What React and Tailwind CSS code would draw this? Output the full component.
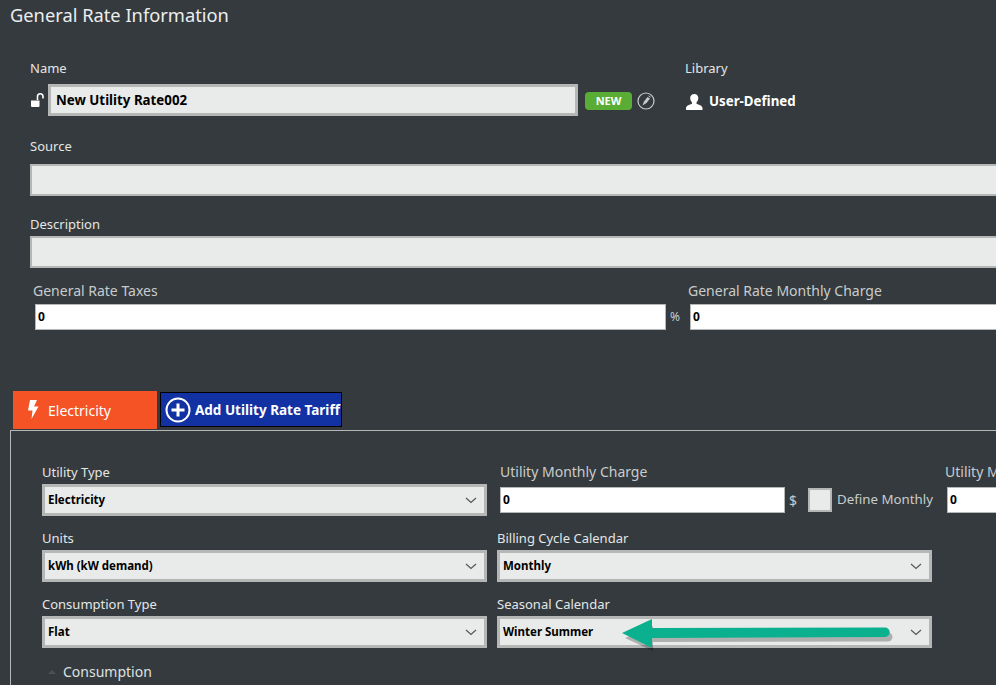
import React from 'react';

const Chevron = () => (
  <svg width="12" height="7" viewBox="0 0 12 7" className="shrink-0">
    <path d="M1 1l5 4.500L11 1" fill="none" stroke="#555b5e" strokeWidth="1.3" />
  </svg>
);

// Label above a dropdown, all the dropdowns share this look
const SelectField = ({ label, value, className }) => (
  <div className={className}>
    <div className="h-[16px] text-[13px] leading-[16px] text-[#e4e6e6]">{label}</div>
    <div className="mt-[4px] flex h-[32px] items-center justify-between border-[3px] border-[#b4b7b6] bg-[#e9ebea] pl-[3px] pr-[7px]">
      <span className="text-[11.5px] font-bold text-black">{value}</span>
      <Chevron />
    </div>
  </div>
);

const NumberInput = ({ className }) => (
  <div className={`flex h-[26px] items-center border border-[#b4b7b6] bg-white pl-[2px] text-[12px] font-bold text-black ${className}`}>
    0
  </div>
);

const LockIcon = () => (
  <svg width="15" height="16" viewBox="0 0 15 16" className="shrink-0">
    <path d="M1 8.500h8.500v5.500a1 1 0 0 1-1 1H2a1 1 0 0 1-1-1z" fill="#fff" />
    <path d="M7.500 8V4.500a2.700 2.700 0 0 1 5.500 0V6.500" fill="none" stroke="#fff" strokeWidth="1.6" />
  </svg>
);

const InfoIcon = () => (
  <svg width="18" height="18" viewBox="0 0 18 18" className="shrink-0">
    <circle cx="9" cy="9" r="8" fill="none" stroke="#c9cccc" strokeWidth="1.2" />
    <path d="M5.500 13.500l1.500-4 3.500-4.500 2.500 1.500-3.500 4.500z" fill="#c9cccc" />
    <path d="M11.500 3.800l2 1.200" stroke="#c9cccc" strokeWidth="1" />
  </svg>
);

const UserIcon = () => (
  <svg width="17" height="16" viewBox="0 0 17 16" className="shrink-0">
    <path d="M8.500 0c2.400 0 3.800 1.700 3.800 4 0 1.800-.8 3.300-1.800 4.200v1.500c1.800.8 6 1.700 6 4.300v2H0v-2c0-2.600 4.200-3.500 6-4.300V8.200C5 7.300 4.200 5.800 4.200 4 4.200 1.700 5.600 0 8.500 0z" fill="#fff" />
  </svg>
);

const BoltIcon = () => (
  <svg width="14" height="20" viewBox="0 0 14 20" className="shrink-0">
    <path d="M4 0h7L8 6.500h4.500L5.500 19l1-8.500H2z" fill="#fff" />
  </svg>
);

const PlusCircle = () => (
  <svg width="26" height="26" viewBox="0 0 26 26" className="shrink-0">
    <circle cx="13" cy="13" r="11.500" fill="none" stroke="#fff" strokeWidth="2" />
    <path d="M13 6.500v13M6.500 13h13" stroke="#fff" strokeWidth="3" />
  </svg>
);

export default function App() {
  return (
    <div className="relative h-[685px] w-[996px] overflow-hidden bg-[#343a3e] font-['Noto_Sans','Open_Sans',sans-serif] text-[#e4e6e6]">
      {/* General info */}
      <div className="pl-[10px] pt-[2px] text-[18.3px] leading-[26px] text-[#eceeee]">General Rate Information</div>

      <div className="mt-[32px] flex pl-[30px]">
        <div className="w-[655px] shrink-0">
          <div className="h-[16px] text-[13px] leading-[16px]">Name</div>
          <div className="mt-[8px] flex items-center">
            <div className="w-[18px]"><LockIcon /></div>
            <div className="flex h-[32px] w-[530px] items-center border-[3px] border-[#b4b7b6] bg-[#e9ebea] pl-[5px] pt-[1px] text-[13.3px] font-bold text-black">
              New Utility Rate002
            </div>
            <div className="ml-[7px] mt-[2px] flex h-[18px] w-[47px] items-center justify-center rounded-[4px] bg-[#5aad34] text-[11px] font-bold text-white">NEW</div>
            <div className="ml-[5px] mt-[2px]"><InfoIcon /></div>
          </div>
        </div>
        <div>
          <div className="h-[16px] text-[13px] leading-[16px]">Library</div>
          <div className="mt-[10px] flex h-[32px] items-center gap-[6px] pl-[1px]">
            <UserIcon />
            <span className="text-[13.3px] font-bold text-white">User-Defined</span>
          </div>
        </div>
      </div>

      <div className="ml-[30px] mt-[20px] h-[16px] text-[13px] leading-[16px]">Source</div>
      <div className="ml-[30px] mt-[10px] h-[32px] w-[980px] border-[2px] border-[#b4b7b6] bg-[#e9ebea]" />

      <div className="ml-[30px] mt-[20px] h-[16px] text-[13px] leading-[16px]">Description</div>
      <div className="ml-[30px] mt-[4px] h-[32px] w-[980px] border-[2px] border-[#b4b7b6] bg-[#e9ebea]" />

      <div className="mt-[14px] flex pl-[33px]">
        <div className="w-[655px] shrink-0">
          <div className="h-[18px] text-[14px] leading-[18px] text-[#c9cccc]">General Rate Taxes</div>
          <div className="mt-[4px] flex items-center pl-[2px]">
            <NumberInput className="w-[631px]" />
            <span className="ml-[4px] text-[12px] text-[#c9cccc]">%</span>
          </div>
        </div>
        <div className="shrink-0">
          <div className="h-[18px] text-[14px] leading-[18px] text-[#c9cccc]">General Rate Monthly Charge</div>
          <NumberInput className="ml-[2px] mt-[4px] w-[320px]" />
        </div>
      </div>

      {/* Tabs */}
      <div className="mt-[61px] flex items-start pl-[13px]">
        <div className="flex h-[38px] w-[144px] items-center gap-[8px] bg-[#f55225] pl-[13px] text-[14px] text-white">
          <BoltIcon />
          <span>Electricity</span>
        </div>
        <div className="ml-[3px] mt-[1px] flex h-[35px] w-[182px] items-center gap-[4px] border border-black bg-[#1232a3] pl-[4px] text-[13.5px] font-bold text-white">
          <PlusCircle />
          <span className="whitespace-nowrap pt-[1px]">Add Utility Rate Tariff</span>
        </div>
      </div>

      {/* Tariff panel */}
      <div className="ml-[10px] mt-[1px] h-[300px] w-[1000px] border border-[#b4b7b6] pl-[31px] pt-[33px]">
        <div className="flex">
          <SelectField label="Utility Type" value="Electricity" className="w-[445px] shrink-0" />
          <div className="ml-[13px] w-[445px] shrink-0">
            <div className="h-[18px] text-[14px] leading-[16px] text-[#c9cccc]">Utility Monthly Charge</div>
            <div className="mt-[4px] flex items-center pt-[1px]">
              <NumberInput className="w-[285px]" />
              <span className="ml-[4px] text-[14px] text-[#c9cccc]">$</span>
              <div className="ml-[11px] h-[24px] w-[24px] border-[2px] border-[#b4b7b6] bg-[#e9ebea]" />
              <span className="ml-[5px] whitespace-nowrap text-[13.3px] text-[#c9cccc]">Define Monthly</span>
            </div>
          </div>
          <div className="w-[60px] shrink-0">
            <div className="h-[18px] overflow-hidden whitespace-nowrap text-[14px] leading-[16px] text-[#c9cccc]">Utility Monthly</div>
            <NumberInput className="ml-[2px] mt-[5px] w-[60px]" />
          </div>
        </div>

        <div className="mt-[14px] flex">
          <SelectField label="Units" value="kWh (kW demand)" className="w-[445px] shrink-0" />
          <SelectField label="Billing Cycle Calendar" value="Monthly" className="ml-[10px] w-[435px] shrink-0" />
        </div>

        <div className="mt-[14px] flex">
          <SelectField label="Consumption Type" value="Flat" className="w-[445px] shrink-0" />
          <SelectField label="Seasonal Calendar" value="Winter Summer" className="ml-[10px] w-[435px] shrink-0" />
        </div>

        <div className="ml-[6px] mt-[15px] flex items-center gap-[7px]">
          <div className="h-0 w-0 border-x-[4px] border-b-[4px] border-x-transparent border-b-[#4a5053]" />
          <span className="text-[14px] leading-[18px] text-[#dfe1e1]">Consumption</span>
        </div>
      </div>

      {/* Annotation arrow over the seasonal calendar */}
      <svg width="276" height="40" viewBox="0 0 276 40" className="absolute left-[620px] top-[615px]">
        <path d="M32 9L4 21l28 13v-9l235-.5a4.500 4.500 0 0 0 0-9L32 17z" fill="#000" opacity="0.25" transform="translate(1 2)" />
        <path d="M32 4L2 18l30 15v-10l233-1a4.500 4.500 0 0 0 0-9.500L32 13z" fill="#0bb08f" />
      </svg>
    </div>
  );
}
